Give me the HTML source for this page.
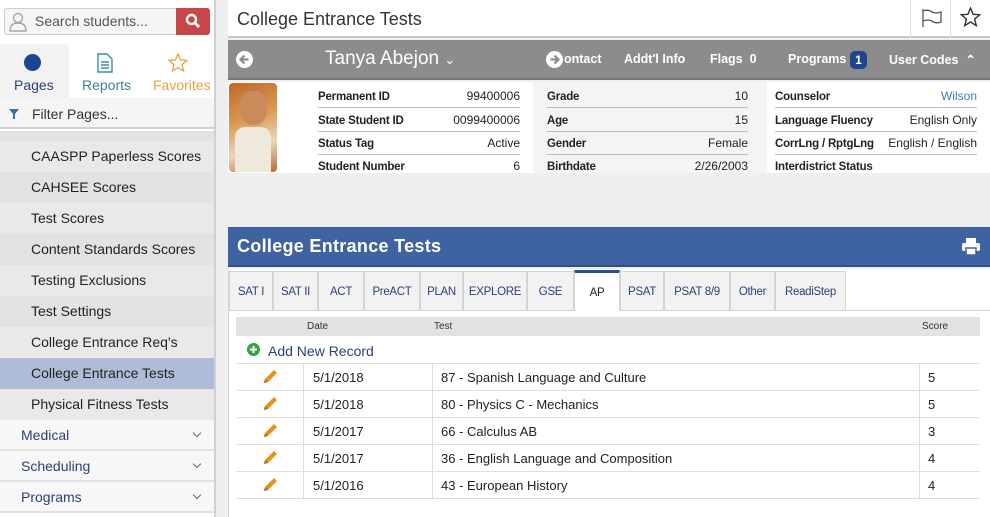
<!DOCTYPE html>
<html style="overflow:hidden"><head><meta charset="utf-8"><style>
*{box-sizing:border-box;margin:0;padding:0}
html,body{width:990px;height:517px;overflow:hidden}
body{font-family:"Liberation Sans",sans-serif;background:#efefef;position:relative;font-size:13px;color:#222}
.a{position:absolute}
#side{left:0;top:0;width:216px;height:517px;background:#fff;border-right:2px solid #d0d0d0;overflow:hidden}
.item{position:absolute;left:0;width:214px;height:31px;line-height:31px;padding-left:31px;font-size:14px;color:#222}
.grp{position:absolute;left:0;width:214px;height:31px;line-height:30px;padding-left:21px;font-size:14px;color:#2d3f77;background:#f7f7f7;border-bottom:2px solid #e2e2e2}
.grp:after{content:"";position:absolute;right:14px;top:10px;width:5px;height:5px;border-right:1px solid #667;border-bottom:1px solid #667;transform:rotate(45deg)}
.lab{font-weight:bold;font-size:11.5px;color:#222;letter-spacing:-.2px}
.row{position:absolute;height:23px;border-bottom:1px solid #bbb;font-size:12px;line-height:22px}
.row span{position:absolute;right:0}
.tab{position:absolute;top:271px;height:39px;line-height:40px;border:1px solid #d4d4d4;border-bottom:none;background:#f2f2f2;font-size:11.5px;color:#2d3f77;text-align:center;letter-spacing:-.3px}
.tr{position:absolute;left:236px;width:744px;height:27px;border-bottom:1px solid #ddd;background:#fff;font-size:13px;line-height:27px}
.tr div{position:absolute;top:0;height:27px}
.nav{position:absolute;top:52px;font-size:12.5px;color:#fff;font-weight:bold}
</style></head><body>
<div id="side" class="a">
 <div class="a" style="left:4px;top:8px;width:206px;height:27px;border:1px solid #ccc;border-radius:3px;background:#f5f5f5"></div>
 <svg class="a" style="left:9px;top:12px" width="18" height="20"><circle cx="9" cy="6" r="4.5" fill="none" stroke="#999" stroke-width="1.2"/><path d="M1 19 Q1 11 9 11 Q17 11 17 19 Z" fill="none" stroke="#999" stroke-width="1.2"/></svg>
 <div class="a" style="left:35px;top:13px;font-size:14px;color:#555">Search students...</div>
 <div class="a" style="left:176px;top:8px;width:34px;height:27px;background:#c8474a;border-radius:0 3px 3px 0"></div>
 <svg class="a" style="left:185px;top:13px" width="16" height="16"><circle cx="6.5" cy="6.5" r="4.5" fill="none" stroke="#fff" stroke-width="2.4"/><path d="M10 10 L14 14" stroke="#fff" stroke-width="3"/></svg>
 <div class="a" style="left:0;top:44px;width:69px;height:54px;background:#f2f2f2;border-radius:3px 3px 0 0"></div>
 <div class="a" style="left:24px;top:54px;width:17px;height:17px;border-radius:50%;background:#1f4590"></div>
 <div class="a" style="left:14px;top:77px;font-size:14px;color:#2d3f77">Pages</div>
 <svg class="a" style="left:96px;top:53px" width="18" height="20"><path d="M2 1 H11 L16 6 V19 H2 Z" fill="none" stroke="#3a8fa0" stroke-width="1.4"/><path d="M5 9H13M5 12H13M5 15H13" stroke="#3a8fa0" stroke-width="1.4"/></svg>
 <div class="a" style="left:82px;top:77px;font-size:14px;color:#3a8390">Reports</div>
 <svg class="a" style="left:168px;top:53px" width="20" height="19"><path d="M10 1 L12.6 7 L19 7.4 L14.1 11.5 L15.6 18 L10 14.5 L4.4 18 L5.9 11.5 L1 7.4 L7.4 7 Z" fill="none" stroke="#e8a040" stroke-width="1.3"/></svg>
 <div class="a" style="left:153px;top:77px;font-size:14px;color:#e8a040">Favorites</div>
 <div class="a" style="left:0;top:98px;width:214px;height:31px;background:#f5f5f5;border-bottom:2px solid #d0d0d0"></div>
 <svg class="a" style="left:9px;top:109px" width="10" height="10"><path d="M0 0H10L6 5V10H4V5Z" fill="#3e6bb0"/></svg>
 <div class="a" style="left:32px;top:106px;font-size:14px;color:#333">Filter Pages...</div>
 <div class="a" style="left:0;top:131px;width:214px;height:10px;background:#e2e2e2"></div>
 <div class="item" style="top:141px;background:#e9e9e9">CAASPP Paperless Scores</div>
 <div class="item" style="top:172px;background:#e2e2e2">CAHSEE Scores</div>
 <div class="item" style="top:203px;background:#e9e9e9">Test Scores</div>
 <div class="item" style="top:234px;background:#e2e2e2">Content Standards Scores</div>
 <div class="item" style="top:265px;background:#e9e9e9">Testing Exclusions</div>
 <div class="item" style="top:296px;background:#e2e2e2">Test Settings</div>
 <div class="item" style="top:327px;background:#e9e9e9">College Entrance Req's</div>
 <div class="item" style="top:358px;background:#aebcd7">College Entrance Tests</div>
 <div class="item" style="top:389px;background:#e9e9e9">Physical Fitness Tests</div>
 <div class="grp" style="top:420px">Medical</div>
 <div class="grp" style="top:451px">Scheduling</div>
 <div class="grp" style="top:482px">Programs</div>
</div>
<div class="a" style="left:228px;top:0;width:762px;height:38px;background:#fff;border-bottom:2px solid #c8c8c8"></div>
<div class="a" style="left:237px;top:9px;font-size:18px;color:#333">College Entrance Tests</div>
<div class="a" style="left:910px;top:0;width:1px;height:38px;background:#ddd"></div>
<div class="a" style="left:950px;top:0;width:1px;height:38px;background:#ddd"></div>
<svg class="a" style="left:921px;top:9px" width="22" height="18"><path d="M2 0V18M2 2Q7 0 11 3Q15 5 20 3V13Q15 15 11 12Q7 10 2 12" fill="none" stroke="#555" stroke-width="1.3"/></svg>
<svg class="a" style="left:960px;top:7px" width="21" height="20"><path d="M10.5 1 L13.1 7.3 L19.8 7.7 L14.6 12 L16.3 18.6 L10.5 15 L4.7 18.6 L6.4 12 L1.2 7.7 L7.9 7.3 Z" fill="none" stroke="#333" stroke-width="1.4"/></svg>
<div class="a" style="left:228px;top:40px;width:762px;height:40px;background:#8c8c8c;border-bottom:2px solid #777"></div>
<svg class="a" style="left:236px;top:51px" width="17" height="17"><circle cx="8.5" cy="8.5" r="8.5" fill="#fff"/><path d="M12.5 8.5H5M8.5 4.5L4.5 8.5L8.5 12.5" fill="none" stroke="#8c8c8c" stroke-width="2.2"/></svg>
<div class="a" style="left:325px;top:48px;font-size:19px;color:#fff">Tanya Abejon <span style="font-size:13px">⌄</span></div>
<svg class="a" style="left:546px;top:51px" width="17" height="17"><circle cx="8.5" cy="8.5" r="8.5" fill="#fff"/><path d="M4.5 8.5H12M8.5 4.5L12.5 8.5L8.5 12.5" fill="none" stroke="#8c8c8c" stroke-width="2.2"/></svg>
<div class="nav" style="left:564px">ontact</div>
<div class="nav" style="left:624px">Addt'l Info</div>
<div class="nav" style="left:710px">Flags &nbsp;0</div>
<div class="nav" style="left:788px">Programs</div>
<div class="a" style="left:850px;top:51px;width:17px;height:18px;border-radius:5px;background:#1f4590;color:#fff;font-weight:bold;font-size:12px;line-height:18px;text-align:center">1</div>
<div class="nav" style="left:889px">User Codes &nbsp;⌃</div>
<div class="a" style="left:228px;top:82px;width:762px;height:91px;background:#fff"></div>
<div class="a" style="left:533px;top:82px;width:234px;height:91px;background:#f4f4f4"></div>
<div class="a" style="left:229px;top:83px;width:48px;height:89px;border-radius:4px;background:linear-gradient(160deg,#c2662a,#d99a52 40%,#ead6bb 70%,#b96a35);overflow:hidden"><div class="a" style="left:11px;top:8px;width:27px;height:34px;border-radius:45%;background:#c98a5c"></div><div class="a" style="left:6px;top:44px;width:36px;height:50px;border-radius:10px 10px 0 0;background:#efe9dc"></div></div>
<div class="row" style="left:318px;top:85px;width:202px"><b class="lab">Permanent ID</b><span>99400006</span></div>
<div class="row" style="left:318px;top:109px;width:202px"><b class="lab">State Student ID</b><span>0099400006</span></div>
<div class="row" style="left:318px;top:132px;width:202px"><b class="lab">Status Tag</b><span>Active</span></div>
<div class="row" style="left:318px;top:155px;width:202px;border:none"><b class="lab">Student Number</b><span>6</span></div>
<div class="row" style="left:547px;top:85px;width:201px"><b class="lab">Grade</b><span>10</span></div>
<div class="row" style="left:547px;top:109px;width:201px"><b class="lab">Age</b><span>15</span></div>
<div class="row" style="left:547px;top:132px;width:201px"><b class="lab">Gender</b><span>Female</span></div>
<div class="row" style="left:547px;top:155px;width:201px;border:none"><b class="lab">Birthdate</b><span>2/26/2003</span></div>
<div class="row" style="left:775px;top:85px;width:202px"><b class="lab">Counselor</b><span style="color:#3e7bc4">Wilson</span></div>
<div class="row" style="left:775px;top:109px;width:202px"><b class="lab">Language Fluency</b><span>English Only</span></div>
<div class="row" style="left:775px;top:132px;width:202px"><b class="lab">CorrLng / RptgLng</b><span>English / English</span></div>
<div class="row" style="left:775px;top:155px;width:202px;border:none"><b class="lab">Interdistrict Status</b></div>
<div class="a" style="left:228px;top:227px;width:762px;height:40px;background:#3f62a0;border-bottom:2px solid #2f4f86"></div>
<div class="a" style="left:237px;top:236px;font-size:18px;color:#fff;font-weight:bold;letter-spacing:.3px">College Entrance Tests</div>
<svg class="a" style="left:962px;top:238px" width="18" height="17"><rect x="4" y="0" width="10" height="5" fill="#fff"/><rect x="0" y="5" width="18" height="8" rx="2" fill="#fff"/><rect x="4" y="10" width="10" height="7" fill="#fff" stroke="#3f62a0" stroke-width="1.5"/></svg>
<div class="a" style="left:228px;top:269px;width:762px;height:248px;background:#fff"></div>
<div class="a" style="left:228px;top:310px;width:762px;height:1px;background:#d4d4d4"></div>
<div class="tab" style="left:229px;width:44px">SAT I</div>
<div class="tab" style="left:273px;width:45px">SAT II</div>
<div class="tab" style="left:318px;width:46px">ACT</div>
<div class="tab" style="left:364px;width:56px">PreACT</div>
<div class="tab" style="left:420px;width:43px">PLAN</div>
<div class="tab" style="left:463px;width:64px">EXPLORE</div>
<div class="tab" style="left:527px;width:47px">GSE</div>
<div class="tab" style="left:574px;width:46px;background:#fff;border-top:3px solid #2d4f8a;height:41px;top:270px;color:#222">AP</div>
<div class="tab" style="left:620px;width:44px">PSAT</div>
<div class="tab" style="left:664px;width:66px">PSAT 8/9</div>
<div class="tab" style="left:730px;width:45px">Other</div>
<div class="tab" style="left:775px;width:71px">ReadiStep</div>
<div class="a" style="left:236px;top:317px;width:744px;height:19px;background:#e2e2e2;font-size:10px;line-height:19px;color:#333">
 <span class="a" style="left:71px">Date</span><span class="a" style="left:198px">Test</span><span class="a" style="left:686px">Score</span></div>
<div class="a" style="left:236px;top:336px;width:744px;height:28px;border-bottom:1px solid #ddd"></div>
<svg class="a" style="left:247px;top:343px" width="13" height="13"><circle cx="6.5" cy="6.5" r="6.5" fill="#3aa04a"/><path d="M6.5 3V10M3 6.5H10" stroke="#fff" stroke-width="2"/></svg>
<div class="a" style="left:268px;top:343px;font-size:14px;color:#2d3f77">Add New Record</div>
<div class="tr" style="top:364px"><div style="left:26px"><svg width="16" height="27"><path d="M2 19 L3 15 L12 6 L15 9 L6 18 Z" fill="#e8901e"/><path d="M2 19L3 15L6 18Z" fill="#b86a10"/></svg></div><div style="left:67px;border-left:1px solid #ddd;padding-left:9px;width:129px">5/1/2018</div><div style="left:196px;border-left:1px solid #ddd;padding-left:8px;width:487px">87 - Spanish Language and Culture</div><div style="left:683px;border-left:1px solid #ddd;padding-left:8px">5</div></div>
<div class="tr" style="top:391px"><div style="left:26px"><svg width="16" height="27"><path d="M2 19 L3 15 L12 6 L15 9 L6 18 Z" fill="#e8901e"/><path d="M2 19L3 15L6 18Z" fill="#b86a10"/></svg></div><div style="left:67px;border-left:1px solid #ddd;padding-left:9px;width:129px">5/1/2018</div><div style="left:196px;border-left:1px solid #ddd;padding-left:8px;width:487px">80 - Physics C - Mechanics</div><div style="left:683px;border-left:1px solid #ddd;padding-left:8px">5</div></div>
<div class="tr" style="top:418px"><div style="left:26px"><svg width="16" height="27"><path d="M2 19 L3 15 L12 6 L15 9 L6 18 Z" fill="#e8901e"/><path d="M2 19L3 15L6 18Z" fill="#b86a10"/></svg></div><div style="left:67px;border-left:1px solid #ddd;padding-left:9px;width:129px">5/1/2017</div><div style="left:196px;border-left:1px solid #ddd;padding-left:8px;width:487px">66 - Calculus AB</div><div style="left:683px;border-left:1px solid #ddd;padding-left:8px">3</div></div>
<div class="tr" style="top:445px"><div style="left:26px"><svg width="16" height="27"><path d="M2 19 L3 15 L12 6 L15 9 L6 18 Z" fill="#e8901e"/><path d="M2 19L3 15L6 18Z" fill="#b86a10"/></svg></div><div style="left:67px;border-left:1px solid #ddd;padding-left:9px;width:129px">5/1/2017</div><div style="left:196px;border-left:1px solid #ddd;padding-left:8px;width:487px">36 - English Language and Composition</div><div style="left:683px;border-left:1px solid #ddd;padding-left:8px">4</div></div>
<div class="tr" style="top:472px"><div style="left:26px"><svg width="16" height="27"><path d="M2 19 L3 15 L12 6 L15 9 L6 18 Z" fill="#e8901e"/><path d="M2 19L3 15L6 18Z" fill="#b86a10"/></svg></div><div style="left:67px;border-left:1px solid #ddd;padding-left:9px;width:129px">5/1/2016</div><div style="left:196px;border-left:1px solid #ddd;padding-left:8px;width:487px">43 - European History</div><div style="left:683px;border-left:1px solid #ddd;padding-left:8px">4</div></div>
<div class="a" style="left:228px;top:269px;width:1px;height:248px;background:#d4d4d4"></div>
</body></html>
